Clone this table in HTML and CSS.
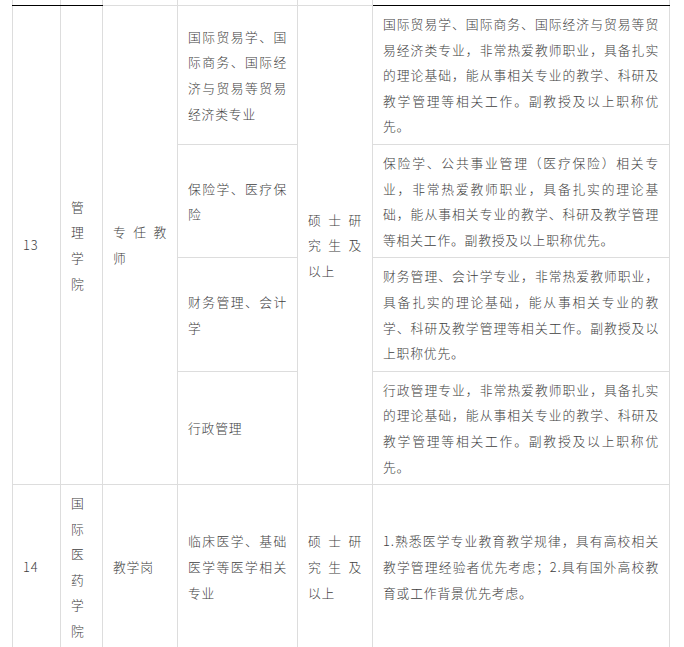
FILE: index.html
```html
<!DOCTYPE html>
<html lang="zh-CN">
<head>
<meta charset="utf-8">
<title>岗位表</title>
<link rel="stylesheet" href="styles.css">
</head>
<body>
<table class="jobs">
  <colgroup>
    <col class="c-no">
    <col class="c-dept">
    <col class="c-post">
    <col class="c-major">
    <col class="c-edu">
    <col class="c-req">
  </colgroup>
  <tbody>
    <tr class="prev">
      <td class="dark"></td>
      <td class="dark"></td>
      <td></td>
      <td></td>
      <td></td>
      <td class="dark"></td>
    </tr>
    <tr>
      <td rowspan="4">13</td>
      <td rowspan="4">管理学院</td>
      <td rowspan="4">专任教师</td>
      <td>国际贸易学、国际商务、国际经济与贸易等贸易经济类专业</td>
      <td rowspan="4">硕士研究生及以上</td>
      <td>国际贸易学、国际商务、国际经济与贸易等贸易经济类专业，非常热爱教师职业，具备扎实的理论基础，能从事相关专业的教学、科研及教学管理等相关工作。副教授及以上职称优先。</td>
    </tr>
    <tr>
      <td>保险学、医疗保险</td>
      <td>保险学、公共事业管理（医疗保险）相关专业，非常热爱教师职业，具备扎实的理论基础，能从事相关专业的教学、科研及教学管理等相关工作。副教授及以上职称优先。</td>
    </tr>
    <tr>
      <td>财务管理、会计学</td>
      <td>财务管理、会计学专业，非常热爱教师职业，具备扎实的理论基础，能从事相关专业的教学、科研及教学管理等相关工作。副教授及以上职称优先。</td>
    </tr>
    <tr>
      <td>行政管理</td>
      <td>行政管理专业，非常热爱教师职业，具备扎实的理论基础，能从事相关专业的教学、科研及教学管理等相关工作。副教授及以上职称优先。</td>
    </tr>
    <tr>
      <td>14</td>
      <td>国际医药学院</td>
      <td>教学岗</td>
      <td>临床医学、基础医学等医学相关专业</td>
      <td>硕士研究生及以上</td>
      <td>1.熟悉医学专业教育教学规律，具有高校相关教学管理经验者优先考虑；2.具有国外高校教育或工作背景优先考虑。</td>
    </tr>
  </tbody>
</table>
</body>
</html>
```
FILE: styles.css
```css
html, body {
  margin: 0;
  padding: 0;
  background: #ffffff;
}

body {
  font-family: "Noto Sans CJK SC", "Noto Sans", sans-serif;
  color: #3e3e3e;
}

.jobs {
  margin-left: 12px;
  border-collapse: collapse;
  table-layout: fixed;
  width: 657px;
}

.c-no { width: 48px; }
.c-dept { width: 42px; }
.c-post { width: 75px; }
.c-major { width: 120px; }
.c-edu { width: 75px; }
.c-req { width: 297px; }

.jobs td {
  border: 1px solid #dddddd;
  padding: 5px 10px;
  vertical-align: middle;
  text-align: justify;
  font-size: 12.8px;
  font-weight: 300;
  line-height: 25.6px;
  letter-spacing: 0.8px;
  word-break: break-all;
}

.jobs .prev td {
  border-top: none;
  height: 5px;
  padding: 0;
  line-height: 0;
}

.jobs .prev td.dark {
  border-bottom-color: #000000;
}
```
